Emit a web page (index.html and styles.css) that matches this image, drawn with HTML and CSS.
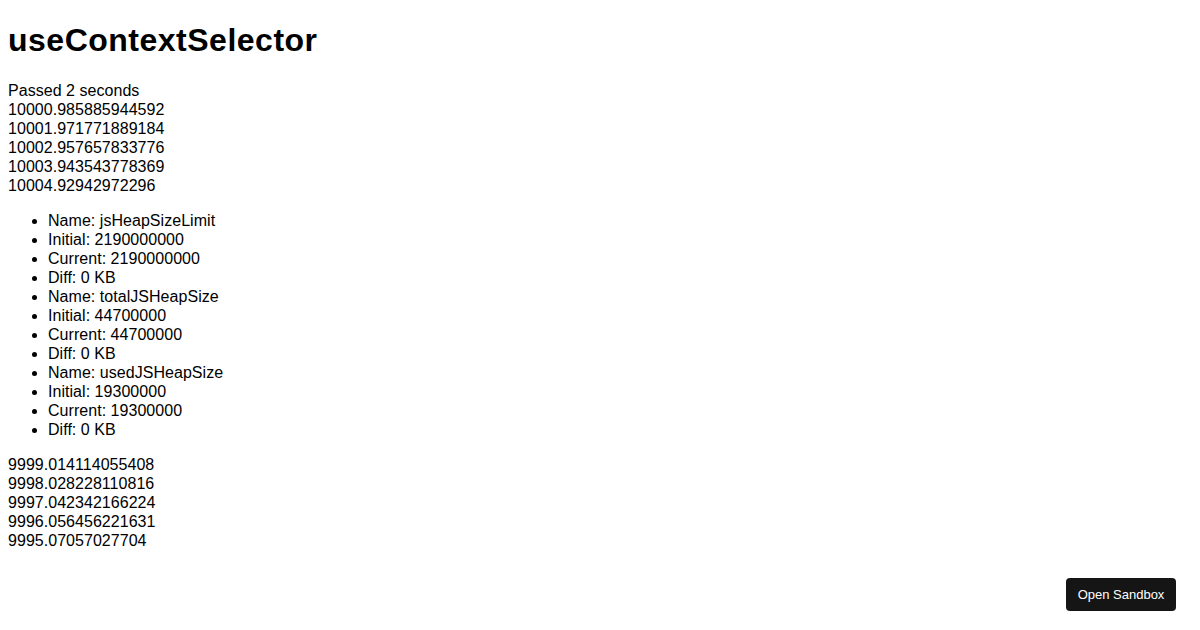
FILE: index.html
```html
<!DOCTYPE html>
<html>
<head>
<meta charset="utf-8">
<link rel="stylesheet" href="styles.css">
</head>
<body>
<h1 class="title">useContextSelector</h1>
<div class="block">
<div>Passed 2 seconds</div>
<div>10000.985885944592</div>
<div>10001.971771889184</div>
<div>10002.957657833776</div>
<div>10003.943543778369</div>
<div>10004.92942972296</div>
</div>
<ul class="mem">
<li>Name: jsHeapSizeLimit</li>
<li>Initial: 2190000000</li>
<li>Current: 2190000000</li>
<li>Diff: 0 KB</li>
<li>Name: totalJSHeapSize</li>
<li>Initial: 44700000</li>
<li>Current: 44700000</li>
<li>Diff: 0 KB</li>
<li>Name: usedJSHeapSize</li>
<li>Initial: 19300000</li>
<li>Current: 19300000</li>
<li>Diff: 0 KB</li>
</ul>
<div class="block">
<div>9999.014114055408</div>
<div>9998.028228110816</div>
<div>9997.042342166224</div>
<div>9996.056456221631</div>
<div>9995.07057027704</div>
</div>
<a class="sandbox-btn" href="#">Open Sandbox</a>
</body>
</html>
```
FILE: styles.css
```css
html {
  margin: 0;
  padding: 0;
}
body {
  margin: 0;
  padding: 0 8px;
  font-family: "Liberation Sans", Arial, sans-serif;
  font-size: 16px;
  line-height: 19px;
  letter-spacing: 0.04px;
  color: #000;
  background: #fff;
}
.title {
  font-size: 32px;
  line-height: 37px;
  font-weight: bold;
  letter-spacing: 0.5px;
  margin: 22.44px 0 21.44px;
}
.mem {
  margin: 16px 0;
  padding-left: 40px;
}
.sandbox-btn {
  position: fixed;
  right: 24px;
  bottom: 19px;
  width: 110px;
  height: 33px;
  box-sizing: border-box;
  display: flex;
  align-items: center;
  justify-content: center;
  background: #151515;
  color: #fff;
  border-radius: 4px;
  font-size: 13px;
  line-height: 16px;
  letter-spacing: 0;
  text-decoration: none;
}
```
